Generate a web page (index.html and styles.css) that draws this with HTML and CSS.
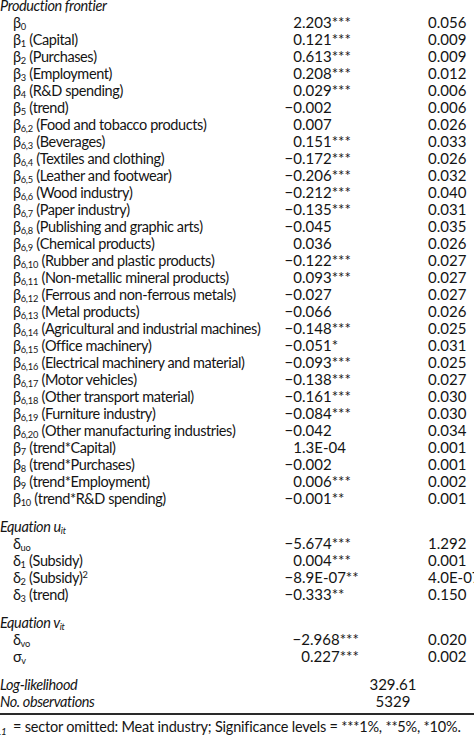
FILE: index.html
```html
<!DOCTYPE html>
<html>
<head>
<meta charset="utf-8">
<link rel="stylesheet" href="styles.css">
</head>
<body>
<div class="tbl">
  <section class="sec">
    <div class="head"><i>Production frontier</i></div>
    <div class="row"><span class="lab">β<sub>0</sub></span><span class="int">2</span><span class="frac">.203***</span><span class="se">0.056</span></div>
    <div class="row"><span class="lab">β<sub>1</sub> (Capital)</span><span class="int">0</span><span class="frac">.121***</span><span class="se">0.009</span></div>
    <div class="row"><span class="lab">β<sub>2</sub> (Purchases)</span><span class="int">0</span><span class="frac">.613***</span><span class="se">0.009</span></div>
    <div class="row"><span class="lab">β<sub>3</sub> (Employment)</span><span class="int">0</span><span class="frac">.208***</span><span class="se">0.012</span></div>
    <div class="row"><span class="lab">β<sub>4</sub> (R&amp;D spending)</span><span class="int">0</span><span class="frac">.029***</span><span class="se">0.006</span></div>
    <div class="row"><span class="lab">β<sub>5</sub> (trend)</span><span class="int">−0</span><span class="frac">.002</span><span class="se">0.006</span></div>
    <div class="row"><span class="lab">β<sub>6,2</sub> (Food and tobacco products)</span><span class="int">0</span><span class="frac">.007</span><span class="se">0.026</span></div>
    <div class="row"><span class="lab">β<sub>6,3</sub> (Beverages)</span><span class="int">0</span><span class="frac">.151***</span><span class="se">0.033</span></div>
    <div class="row"><span class="lab">β<sub>6,4</sub> (Textiles and clothing)</span><span class="int">−0</span><span class="frac">.172***</span><span class="se">0.026</span></div>
    <div class="row"><span class="lab">β<sub>6,5</sub> (Leather and footwear)</span><span class="int">−0</span><span class="frac">.206***</span><span class="se">0.032</span></div>
    <div class="row"><span class="lab">β<sub>6,6</sub> (Wood industry)</span><span class="int">−0</span><span class="frac">.212***</span><span class="se">0.040</span></div>
    <div class="row"><span class="lab">β<sub>6,7</sub> (Paper industry)</span><span class="int">−0</span><span class="frac">.135***</span><span class="se">0.031</span></div>
    <div class="row"><span class="lab">β<sub>6,8</sub> (Publishing and graphic arts)</span><span class="int">−0</span><span class="frac">.045</span><span class="se">0.035</span></div>
    <div class="row"><span class="lab">β<sub>6,9</sub> (Chemical products)</span><span class="int">0</span><span class="frac">.036</span><span class="se">0.026</span></div>
    <div class="row"><span class="lab">β<sub>6,10</sub> (Rubber and plastic products)</span><span class="int">−0</span><span class="frac">.122***</span><span class="se">0.027</span></div>
    <div class="row"><span class="lab">β<sub>6,11</sub> (Non-metallic mineral products)</span><span class="int">0</span><span class="frac">.093***</span><span class="se">0.027</span></div>
    <div class="row"><span class="lab">β<sub>6,12</sub> (Ferrous and non-ferrous metals)</span><span class="int">−0</span><span class="frac">.027</span><span class="se">0.027</span></div>
    <div class="row"><span class="lab">β<sub>6,13</sub> (Metal products)</span><span class="int">−0</span><span class="frac">.066</span><span class="se">0.026</span></div>
    <div class="row"><span class="lab">β<sub>6,14</sub> (Agricultural and industrial machines)</span><span class="int">−0</span><span class="frac">.148***</span><span class="se">0.025</span></div>
    <div class="row"><span class="lab">β<sub>6,15</sub> (Office machinery)</span><span class="int">−0</span><span class="frac">.051*</span><span class="se">0.031</span></div>
    <div class="row"><span class="lab">β<sub>6,16</sub> (Electrical machinery and material)</span><span class="int">−0</span><span class="frac">.093***</span><span class="se">0.025</span></div>
    <div class="row"><span class="lab">β<sub>6,17</sub> (Motor vehicles)</span><span class="int">−0</span><span class="frac">.138***</span><span class="se">0.027</span></div>
    <div class="row"><span class="lab">β<sub>6,18</sub> (Other transport material)</span><span class="int">−0</span><span class="frac">.161***</span><span class="se">0.030</span></div>
    <div class="row"><span class="lab">β<sub>6,19</sub> (Furniture industry)</span><span class="int">−0</span><span class="frac">.084***</span><span class="se">0.030</span></div>
    <div class="row"><span class="lab">β<sub>6,20</sub> (Other manufacturing industries)</span><span class="int">−0</span><span class="frac">.042</span><span class="se">0.034</span></div>
    <div class="row"><span class="lab">β<sub>7</sub> (trend*Capital)</span><span class="int">1</span><span class="frac">.3E-04</span><span class="se">0.001</span></div>
    <div class="row"><span class="lab">β<sub>8</sub> (trend*Purchases)</span><span class="int">−0</span><span class="frac">.002</span><span class="se">0.001</span></div>
    <div class="row"><span class="lab">β<sub>9</sub> (trend*Employment)</span><span class="int">0</span><span class="frac">.006***</span><span class="se">0.002</span></div>
    <div class="row"><span class="lab">β<sub>10</sub> (trend*R&amp;D spending)</span><span class="int">−0</span><span class="frac">.001**</span><span class="se">0.001</span></div>
  </section>

  <section class="sec sec-u">
    <div class="head"><i>Equation u<sub>it</sub></i></div>
    <div class="row"><span class="lab">δ<sub>uo</sub></span><span class="int">−5</span><span class="frac">.674***</span><span class="se">1.292</span></div>
    <div class="row"><span class="lab">δ<sub>1</sub> (Subsidy)</span><span class="int">0</span><span class="frac">.004***</span><span class="se">0.001</span></div>
    <div class="row"><span class="lab">δ<sub>2</sub> (Subsidy)<sup>2</sup></span><span class="int">−8</span><span class="frac">.9E-07**</span><span class="se">4.0E-07</span></div>
    <div class="row"><span class="lab">δ<sub>3</sub> (trend)</span><span class="int">−0</span><span class="frac">.333**</span><span class="se">0.150</span></div>
  </section>

  <section class="sec sec-v">
    <div class="head"><i>Equation v<sub>it</sub></i></div>
    <div class="row row-v"><span class="lab">δ<sub>vo</sub></span><span class="int">−2</span><span class="frac">.968***</span><span class="se">0.020</span></div>
    <div class="row row-v"><span class="lab">σ<sub>v</sub></span><span class="int">0</span><span class="frac">.227***</span><span class="se">0.002</span></div>
  </section>

  <section class="sec sec-fit">
    <div class="fit"><i class="fit-lab">Log-likelihood</i><span class="fit-val">329.61</span></div>
    <div class="fit"><i class="fit-lab">No. observations</i><span class="fit-val">5329</span></div>
  </section>

  <p class="note"><i class="note-sub">ε,1</i> = sector omitted: Meat industry; Significance levels = ***1%, **5%, *10%.</p>
</div>
</body>
</html>
```

FILE: styles.css
```css
html, body {
  margin: 0;
  padding: 0;
  background: #ffffff;
}

body {
  width: 474px;
  height: 735px;
  overflow: hidden;
  font-family: Lato, "Noto Sans", sans-serif;
  font-size: 15px;
  color: #141414;
}

.tbl {
  margin-top: -3px;
}

.sec + .sec {
  margin-top: 11px;
}

.sec-v {
  margin-top: 10px;
}

.sec-fit {
  margin-top: 11px !important;
  padding-bottom: 3px;
  border-bottom: 2px solid #2a2a2a;
}

.head,
.row,
.fit {
  height: 17px;
  line-height: 17px;
  white-space: nowrap;
}

.head,
.lab,
.fit-lab,
.note {
  font-size: 14.5px;
  letter-spacing: -0.4px;
}

.row {
  display: grid;
  grid-template-columns: 270px 32px 126px 46px;
}

.row-v {
  grid-template-columns: 278px 32px 118px 46px;
}

.lab {
  padding-left: 13px;
}

.int {
  text-align: right;
}

.frac,
.se {
  text-align: left;
}

sub,
sup {
  font-size: 64%;
  line-height: 0;
  position: relative;
  vertical-align: baseline;
  letter-spacing: -0.2px;
}

sub {
  top: 0.26em;
}

sup {
  top: -0.55em;
}

.fit {
  display: grid;
  grid-template-columns: 353px 80px;
}

.fit-val {
  text-align: center;
}

.note {
  margin: 3px 0 0 0;
  line-height: 17px;
  white-space: nowrap;
  letter-spacing: -0.2px;
}

.note-sub {
  font-size: 68%;
  position: relative;
  top: 0.3em;
  margin-left: -5px;
  margin-right: 3px;
}
```
